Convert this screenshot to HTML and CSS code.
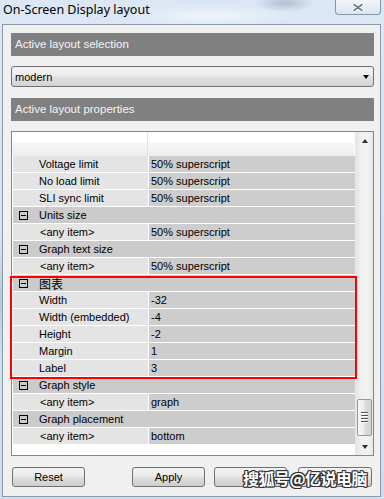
FILE: index.html
```html
<!DOCTYPE html>
<html>
<head>
<meta charset="utf-8">
<title>On-Screen Display layout</title>
<link rel="stylesheet" href="styles.css">
</head>
<body>
<div class="screen">
  <div class="titlebar">
    <div class="title">On-Screen Display layout</div>
    <div class="close">
      <svg width="12" height="9" viewBox="0 0 12 9">
        <path d="M2 1.5 L10 7.5 M10 1.5 L2 7.5" stroke="#ffffff" stroke-width="3.6" stroke-linecap="round" fill="none"/>
        <path d="M2 1.5 L10 7.5 M10 1.5 L2 7.5" stroke="#6b7a8c" stroke-width="1.6" stroke-linecap="round" fill="none"/>
      </svg>
    </div>
  </div>
  <div class="dialog">
    <div class="section">Active layout selection</div>
    <div class="combo"><span class="combo-text">modern</span><span class="combo-arrow"></span></div>
    <div class="section">Active layout properties</div>
    <div class="grid">
      <div class="table">
        <div class="thead"><div class="th th1"></div><div class="th th2"></div></div>
        <div class="row"><div class="name">Voltage limit</div><div class="val">50% superscript</div></div>
        <div class="row"><div class="name">No load limit</div><div class="val">50% superscript</div></div>
        <div class="row"><div class="name">SLI sync limit</div><div class="val">50% superscript</div></div>
        <div class="row group"><div class="gname"><i class="minus"></i>Units size</div></div>
        <div class="row"><div class="name any">&lt;any item&gt;</div><div class="val">50% superscript</div></div>
        <div class="row group"><div class="gname"><i class="minus"></i>Graph text size</div></div>
        <div class="row"><div class="name any">&lt;any item&gt;</div><div class="val">50% superscript</div></div>
        <div class="row group"><div class="gname"><i class="minus"></i><span class="cjk">图表</span></div></div>
        <div class="row"><div class="name">Width</div><div class="val">-32</div></div>
        <div class="row"><div class="name">Width (embedded)</div><div class="val">-4</div></div>
        <div class="row"><div class="name">Height</div><div class="val">-2</div></div>
        <div class="row"><div class="name">Margin</div><div class="val">1</div></div>
        <div class="row"><div class="name">Label</div><div class="val">3</div></div>
        <div class="row group"><div class="gname"><i class="minus"></i>Graph style</div></div>
        <div class="row"><div class="name any">&lt;any item&gt;</div><div class="val">graph</div></div>
        <div class="row group"><div class="gname"><i class="minus"></i>Graph placement</div></div>
        <div class="row"><div class="name any">&lt;any item&gt;</div><div class="val">bottom</div></div>
      </div>
      <div class="scrollbar">
        <div class="sb-btn"><span class="tri-up"></span></div>
        <div class="sb-thumb"><span class="grip"></span><span class="grip"></span><span class="grip"></span><span class="grip"></span></div>
        <div class="sb-fill"></div>
        <div class="sb-btn"><span class="tri-down"></span></div>
      </div>
    </div>
    <div class="buttons">
      <div class="btn b-reset">Reset</div>
      <div class="btn b-apply">Apply</div>
      <div class="btn b-ok">OK</div>
      <div class="btn b-cancel">Cancel</div>
    </div>
  </div>
  <div class="highlight"></div>
  <div class="watermark">搜狐号@亿说电脑</div>
</div>
</body>
</html>
```
FILE: styles.css
```css
* { box-sizing: border-box; margin: 0; padding: 0; }
html, body { width: 384px; height: 499px; overflow: hidden; }
body { background: #d3e2f2; font-family: "Liberation Sans", Arial, sans-serif; }

.screen {
  position: relative;
  width: 384px;
  height: 499px;
  background:
    radial-gradient(ellipse 30px 9px at 285px 3px, rgba(140,160,185,0.55), transparent),
    radial-gradient(ellipse 90px 12px at 210px 16px, rgba(255,255,255,0.55), transparent),
    radial-gradient(ellipse 20px 60px at 0px 300px, rgba(150,175,205,0.5), transparent),
    linear-gradient(#dbe7f4, #cddff0);
}

.titlebar { height: 24px; display: flex; align-items: flex-start; }
.title {
  font-family: "Noto Sans", sans-serif;
  font-size: 12.5px;
  line-height: 18px;
  color: #000;
  padding: 1px 0 0 3px;
}
.close {
  margin-left: auto;
  margin-right: 3px;
  width: 46px;
  height: 15px;
  border: 1px solid #8494a9;
  border-top: 0;
  border-radius: 0 0 4px 4px;
  background: linear-gradient(#f3f6fa, #dae4ef);
  display: flex;
  align-items: center;
  justify-content: center;
}

.dialog {
  margin-left: 2px;
  width: 379px;
  height: 473px;
  border: 1px solid #8d99a7;
  background: #f0f0f0;
  padding: 8px 6px 0 8px;
  display: flex;
  flex-direction: column;
}

.section {
  height: 23px;
  flex: none;
  background: #808080;
  color: #f4f4f4;
  font-size: 11.5px;
  line-height: 23px;
  padding-left: 4px;
}

.combo {
  flex: none;
  margin: 10px 0 11px;
  height: 21px;
  border: 1px solid #707070;
  border-radius: 3px;
  background: linear-gradient(#f3f3f3 0%, #ececec 45%, #e0e0e0 55%, #d3d3d3 100%);
  display: flex;
  align-items: center;
  padding: 0 4px 0 3px;
  font-size: 11px;
  color: #000;
}
.combo-text { flex: 1; }
.combo-arrow {
  width: 0; height: 0;
  border-left: 3.5px solid transparent;
  border-right: 3.5px solid transparent;
  border-top: 4px solid #000;
}

.grid {
  flex: none;
  margin-top: 10px;
  height: 325px;
  border: 1px solid #828790;
  background: #fff;
  display: flex;
}
.table { width: 343px; }

.thead {
  height: 24px;
  display: flex;
  background: linear-gradient(#ffffff 0%, #ffffff 42%, #f5f6f7 46%, #eceef0 100%);
}
.th1 { width: 136px; border-right: 1px solid #e2e3e5; }
.th2 { flex: 1; border-right: 1px solid #fafafa; }

.row {
  display: flex;
  height: 16px;
  margin: 0 0 1px 1px;
  font-size: 11px;
  line-height: 17px;
  color: #000;
  white-space: nowrap;
}
.name {
  width: 135px;
  height: 16px;
  margin-right: 1px;
  background: #e4e4e4;
  padding-left: 26px;
}
.name.any { padding-left: 27px; }
.val {
  width: 206px;
  height: 16px;
  background: #cdcdcd;
  padding-left: 2px;
}
.gname {
  width: 342px;
  height: 16px;
  background: #cbcbcb;
  padding-left: 6px;
  display: flex;
  align-items: center;
}
.minus {
  width: 9px;
  height: 9px;
  border: 1px solid #000;
  margin-right: 11px;
  display: flex;
  align-items: center;
  justify-content: center;
}
.minus::before {
  content: "";
  width: 5px;
  height: 1px;
  background: #000;
}
.cjk { font-family: "Noto Sans CJK SC", sans-serif; font-size: 12px; }

.scrollbar {
  width: 18px;
  display: flex;
  flex-direction: column;
  border-left: 1px solid #e8e8e8;
  background: linear-gradient(to right, #e4e4e4, #efefef 25%, #f3f3f3 70%, #e6e6e6);
}
.sb-btn {
  height: 17px;
  flex: none;
  display: flex;
  align-items: center;
  justify-content: center;
}
.tri-up, .tri-down {
  width: 0; height: 0;
  border-left: 3.5px solid transparent;
  border-right: 3.5px solid transparent;
}
.tri-up { border-bottom: 4px solid #303030; }
.tri-down { border-top: 4px solid #303030; }
.sb-thumb {
  flex: none;
  margin: 250px 1px 0 1px;
  height: 37px;
  border: 1px solid #979797;
  border-radius: 2px;
  background: linear-gradient(to right, #f7f7f7, #ececec 45%, #dadada 55%, #d4d4d4);
  display: flex;
  flex-direction: column;
  align-items: center;
  justify-content: center;
  gap: 1px;
}
.grip {
  width: 7px;
  height: 1px;
  background: #555;
  box-shadow: 0 1px 0 #fafafa;
  margin-bottom: 1px;
}
.sb-fill { flex: 1; }

.buttons {
  flex: none;
  margin-top: 11px;
  display: flex;
}
.btn {
  width: 73px;
  height: 20px;
  border: 1px solid #707070;
  border-radius: 3px;
  background: linear-gradient(#f2f2f2 0%, #ebebeb 45%, #dddddd 55%, #cfcfcf 100%);
  font-size: 11px;
  color: #000;
  display: flex;
  align-items: center;
  justify-content: center;
}
.b-reset { margin-left: 1px; }
.b-apply { margin-left: 47px; }
.b-ok { margin-left: 9px; }
.b-cancel { margin-left: 11px; width: 74px; }

.highlight {
  position: absolute;
  left: 10px;
  top: 276px;
  width: 347px;
  height: 103px;
  border: 2px solid #ff0000;
}

.watermark {
  position: absolute;
  left: 243px;
  top: 467px;
  font-family: "Noto Sans CJK SC", sans-serif;
  font-size: 16px;
  font-weight: bold;
  line-height: 22px;
  color: #ffffff;
  letter-spacing: -0.5px;
  text-shadow:
    1px 0 0 #333, -1px 0 0 #333, 0 1px 0 #333, 0 -1px 0 #333,
    1px 1px 0 #333, -1px -1px 0 #333, 1px -1px 0 #333, -1px 1px 0 #333;
}
```
